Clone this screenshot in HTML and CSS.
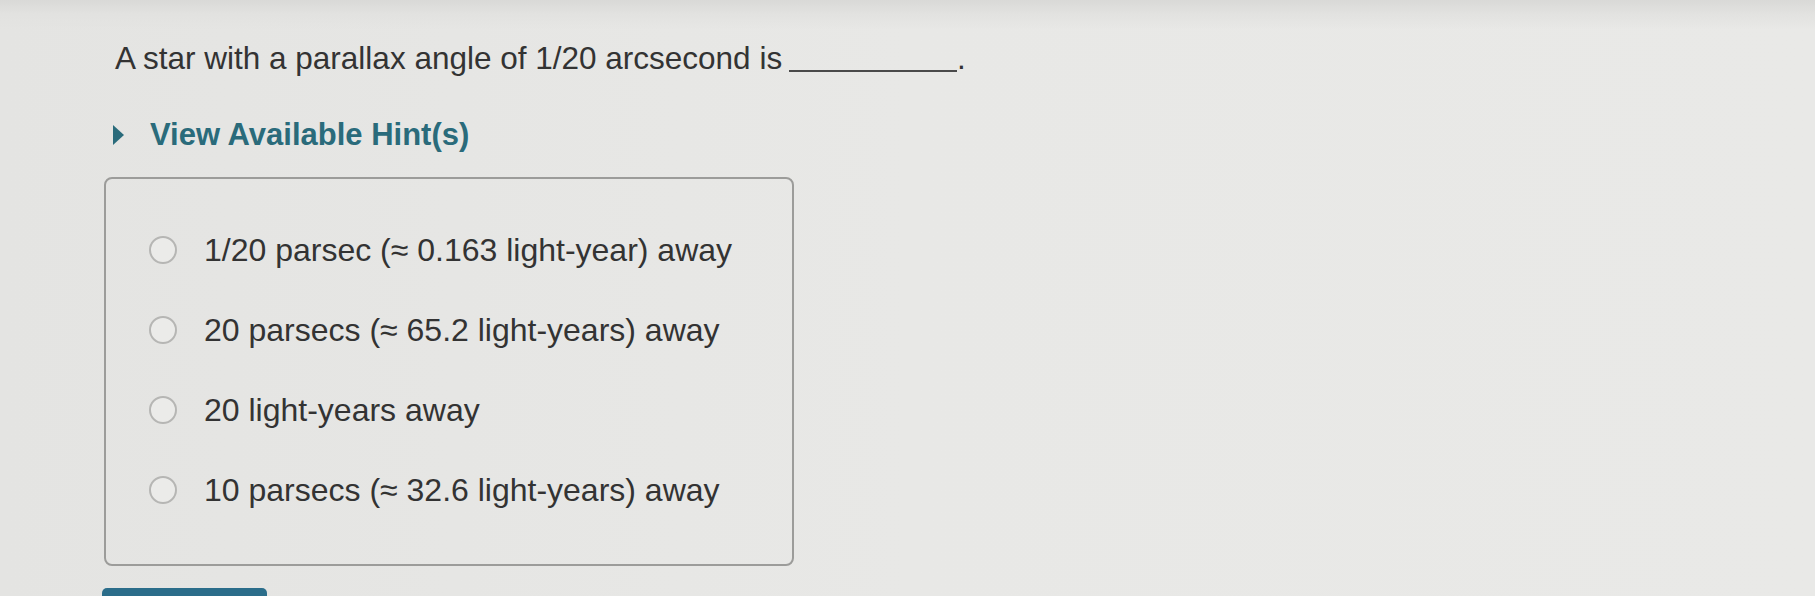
FILE: index.html
```html
<!DOCTYPE html>
<html lang="en">
<head>
<meta charset="utf-8">
<title>Parallax question</title>
<link rel="stylesheet" href="styles.css">
</head>
<body>
<div class="page">
  <p class="question">A star with a parallax angle of 1/20 arcsecond is <span class="blank"></span>.</p>
  <div class="hint">
    <svg class="caret" width="13" height="22" viewBox="0 0 13 22"><path d="M1 1 L12 11 L1 21 Z" fill="#2a6b7b"/></svg>
    <span class="hint-text">View Available Hint(s)</span>
  </div>
  <div class="choices">
    <label class="choice"><span class="radio"></span><span class="label">1/20 parsec (≈ 0.163 light-year) away</span></label>
    <label class="choice"><span class="radio"></span><span class="label">20 parsecs (≈ 65.2 light-years) away</span></label>
    <label class="choice"><span class="radio"></span><span class="label">20 light-years away</span></label>
    <label class="choice"><span class="radio"></span><span class="label">10 parsecs (≈ 32.6 light-years) away</span></label>
  </div>
  <div class="submit"></div>
</div>
</body>
</html>
```
FILE: styles.css
```css
html, body {
  margin: 0;
  padding: 0;
  height: 100%;
  overflow: hidden;
}
body {
  background:
    linear-gradient(to bottom, #d9d9d7 0px, #e2e2e0 14px, rgba(230,230,228,0) 30px),
    linear-gradient(to right, #e4e4e2 0%, #e8e8e6 50%, #e9e9e7 100%);
  font-family: "Liberation Sans", Arial, sans-serif;
  color: #3a3a3a;
}
.page {
  padding: 40px 0 0 104px;
  display: flex;
  flex-direction: column;
  align-items: flex-start;
}
.question {
  margin: 0 0 0 11px;
  font-size: 31.5px;
  line-height: 36px;
  color: #333333;
}
.blank {
  display: inline-block;
  width: 168px;
  height: 30px;
  border-bottom: 2px solid #4a4a4a;
  margin-left: -2px;
  vertical-align: -3px;
}
.hint {
  margin: 41px 0 0 8px;
  display: flex;
  align-items: center;
  gap: 25px;
  height: 36px;
}
.caret {
  display: block;
}
.hint-text {
  font-size: 31px;
  line-height: 36px;
  font-weight: bold;
  color: #2a6b7b;
}
.choices {
  margin-top: 24px;
  width: 690px;
  box-sizing: border-box;
  border: 2px solid #9c9c9a;
  border-radius: 8px;
  padding: 53px 0 56px 43px;
  display: flex;
  flex-direction: column;
  gap: 44px;
}
.choice {
  display: flex;
  align-items: center;
  gap: 27px;
  height: 36px;
}
.radio {
  width: 24px;
  height: 24px;
  border: 2px solid #b6b6b4;
  border-radius: 50%;
  background: #ebebe9;
  flex: none;
}
.label {
  font-size: 32px;
  line-height: 36px;
  color: #333333;
}
.submit {
  margin: 22px 0 0 -2px;
  width: 165px;
  height: 9px;
  background: #2b6d8a;
  border-radius: 5px 5px 0 0;
}
```
